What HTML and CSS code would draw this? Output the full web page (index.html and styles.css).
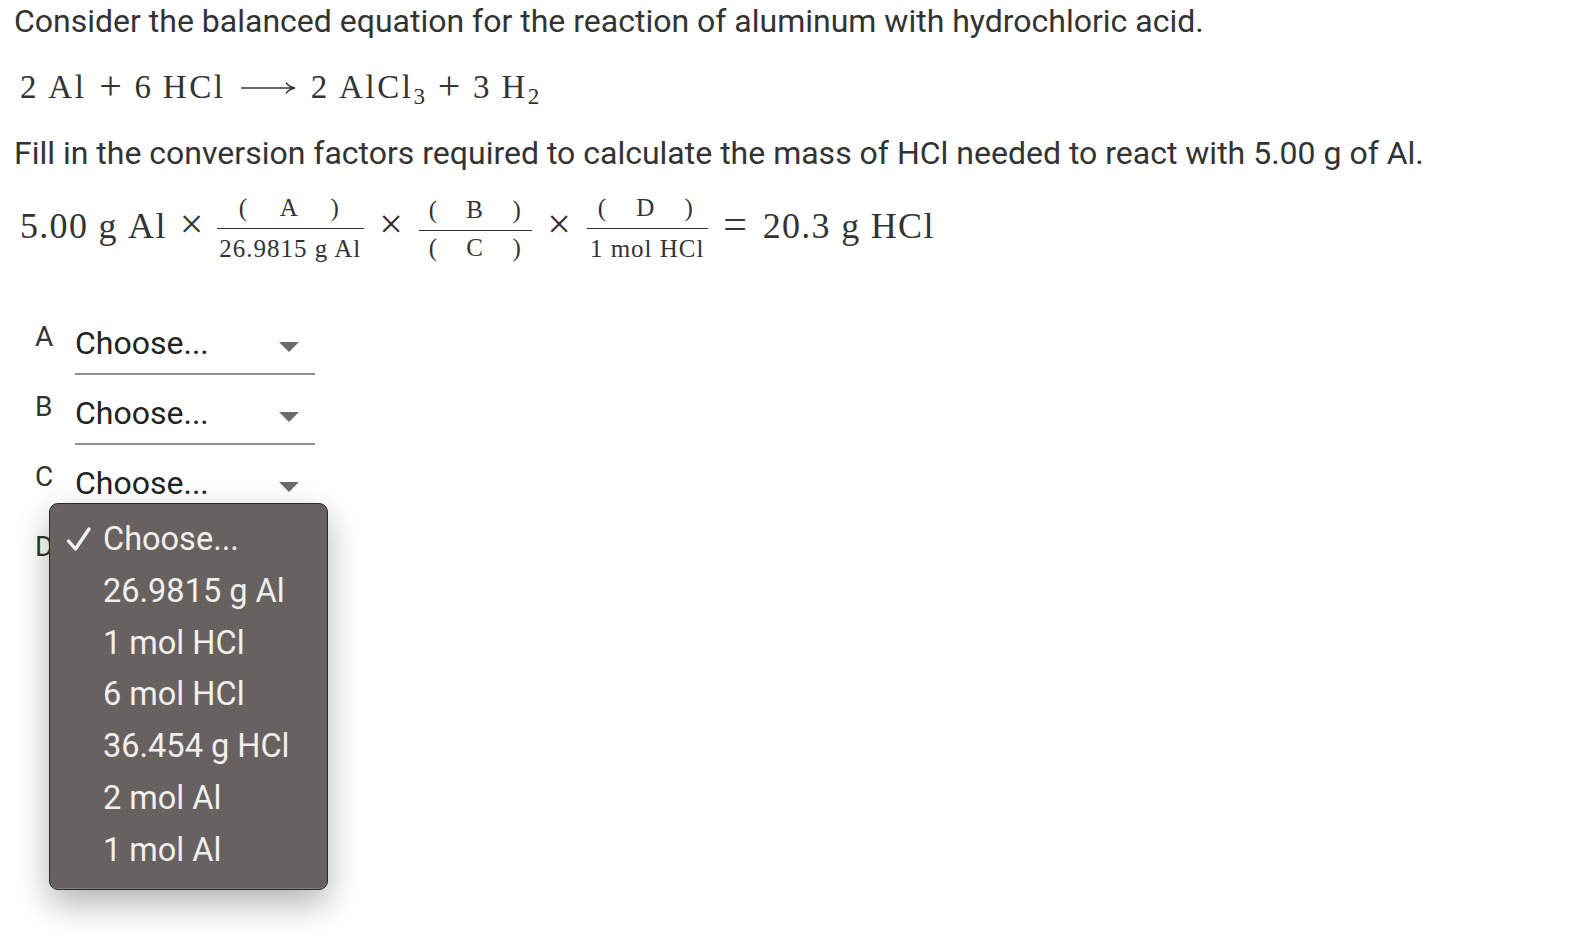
FILE: index.html
```html
<!DOCTYPE html>
<html lang="en">
  <head>
    <meta charset="utf-8">
    <title>Conversion Factors</title>
    <link rel="stylesheet" href="styles.css">
  </head>
  <body>

    <p class="lead">Consider the balanced equation for the reaction of aluminum with hydrochloric acid.</p>

    <div class="math eq">
      <span>2&thinsp;Al</span><span class="op">+</span><span>6&thinsp;HCl</span>
      <svg class="arrow" width="56" height="14" viewBox="0 0 56 14">
        <line x1="1" y1="7" x2="54" y2="7" stroke="#333" stroke-width="1.4"/>
        <path d="M46 1.5 Q49 6 55 7 Q49 8 46 12.5" fill="none" stroke="#333" stroke-width="1.4"/>
      </svg>
      <span>2&thinsp;AlCl<sub>3</sub></span><span class="op">+</span><span>3&thinsp;H<sub>2</sub></span>
    </div>

    <p class="lead">Fill in the conversion factors required to calculate the mass of HCl needed to react with 5.00 g of Al.</p>

    <div class="math calc">
      <span class="term">5.00&nbsp;g&nbsp;Al</span><span class="op first">&times;</span>
      <span class="frac f1">
        <span class="num"><i>(</i><i>A</i><i>)</i></span>
        <span class="den">26.9815 g Al</span>
      </span>
      <span class="op">&times;</span>
      <span class="frac f2">
        <span class="num"><i>(</i><i>B</i><i>)</i></span>
        <span class="den paren"><i>(</i><i>C</i><i>)</i></span>
      </span>
      <span class="op">&times;</span>
      <span class="frac f3">
        <span class="num"><i>(</i><i>D</i><i>)</i></span>
        <span class="den">1 mol HCl</span>
      </span>
      <span class="op">=</span><span class="term">20.3&nbsp;g&nbsp;HCl</span>
    </div>

    <div class="answers">
      <div class="row">
        <span class="letter">A</span>
        <div class="pick"><span>Choose...</span><b class="caret"></b></div>
      </div>
      <div class="row">
        <span class="letter">B</span>
        <div class="pick"><span>Choose...</span><b class="caret"></b></div>
      </div>
      <div class="row">
        <span class="letter">C</span>
        <div class="pick"><span>Choose...</span><b class="caret"></b></div>
      </div>
      <div class="row">
        <span class="letter">D</span>
        <div class="pick"><span>Choose...</span><b class="caret"></b></div>
      </div>

      <!-- open option list for D -->
      <ul class="menu">
        <li class="checked">
          <svg class="tick" width="26" height="26" viewBox="0 0 26 26">
            <path d="M2.5 15 L9.5 23 L23 3" fill="none" stroke="#f2f2f2" stroke-width="3.4" stroke-linecap="round" stroke-linejoin="round"/>
          </svg>Choose...
        </li>
        <li>26.9815 g Al</li>
        <li>1 mol HCl</li>
        <li>6 mol HCl</li>
        <li>36.454 g HCl</li>
        <li>2 mol Al</li>
        <li>1 mol Al</li>
      </ul>
    </div>

  </body>
</html>
```

FILE: styles.css
```css
* { box-sizing: border-box; }
body {
  margin: 0;
  padding: 0 14px;
  min-height: 940px;
  background-color: #fff;
  color: #333;
  font-family: Roboto, 'Liberation Sans', sans-serif;
}
.lead {
  margin: 0;
  font-size: 32px;
  line-height: 42px;
}

/* math lines */
.math {
  font-family: 'Liberation Serif', 'DejaVu Serif', serif;
  color: #333;
  display: flex;
  align-items: center;
  white-space: nowrap;
}
.math i { font-style: normal; }
.math sub {
  font-size: 0.7em;
  line-height: 0;
  vertical-align: -0.25em;
  letter-spacing: 0;
}
.eq {
  font-size: 33px;
  letter-spacing: 2.6px;
  height: 46px;
  margin: 22px 0 22px 6px;
}
.eq .op {
  width: 48px;
  text-align: center;
  font-size: 40px;
  letter-spacing: 0;
  margin-top: -3px;
}
.eq .arrow { margin: 2px 15px 0 14px; }

.calc {
  font-size: 36px;
  height: 100px;
  margin: 2px 0 0 6px;
}
.calc .term { letter-spacing: 1.3px; }
.calc .op {
  width: 55px;
  text-align: center;
  font-size: 42px;
  margin-top: -4px;
}
.calc .op.first { width: 50px; }
.frac {
  display: inline-flex;
  flex-direction: column;
  font-size: 25px;
  letter-spacing: 1px;
  line-height: 1;
  margin-top: 4px;
}
.frac .num {
  display: flex;
  justify-content: space-between;
  padding: 0 24px 8px 22px;
  border-bottom: 1.5px solid #333;
}
.frac .den {
  text-align: center;
  padding-top: 7px;
}
.frac .den.paren {
  display: flex;
  justify-content: space-between;
  padding: 4px 10px 0 10px;
}
.f1 { width: 147px; }
.f2 { width: 113px; }
.f2 .num { padding: 0 10px 8px 10px; }
.f3 { width: 121px; }
.f3 .num { padding: 0 14px 8px 11px; }

/* answer pickers */
.answers {
  position: relative;
  margin-top: 44px;
  padding-left: 21px;
  min-height: 600px;
}
.row {
  display: flex;
  height: 70px;
}
.letter {
  width: 40px;
  font-size: 28px;
  line-height: 34px;
}
.pick {
  width: 240px;
  height: 55px;
  display: flex;
  justify-content: space-between;
  font-size: 32px;
  line-height: 46px;
  color: #222;
  border-bottom: 2px solid #8f8f8f;
}
.caret {
  width: 0;
  height: 0;
  margin: 22px 16px 0 0;
  border-left: 10px solid transparent;
  border-right: 10px solid transparent;
  border-top: 10px solid #6b6b6b;
}

/* native-looking open menu */
.menu {
  position: absolute;
  left: 35px;
  top: 183px;
  width: 279px;
  margin: 0;
  padding: 10px 0 12px 0;
  list-style: none;
  background-color: #67625f;
  border: 1px solid #2b2827;
  border-radius: 9px;
  box-shadow: inset 0 -1px 0 rgba(255,255,255,0.18), 0 14px 34px rgba(0,0,0,0.3);
  color: #f1f0ef;
  font-size: 32.5px;
}
.menu li {
  height: 51.8px;
  line-height: 51.8px;
  padding-left: 53px;
  position: relative;
}
.menu .tick {
  position: absolute;
  left: 16px;
  top: 12px;
}
```
